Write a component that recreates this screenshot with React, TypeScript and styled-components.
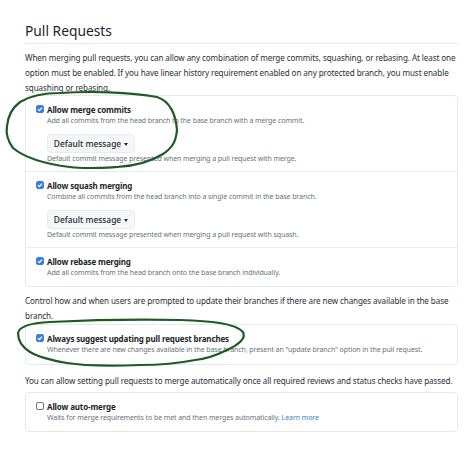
import React from "react";
import styled, { createGlobalStyle } from "styled-components";

const Global = createGlobalStyle`
  html, body { margin: 0; padding: 0; background: #fff; }
  body { font-family: "Noto Sans", "Liberation Sans", sans-serif; color: #1f2328; }
`;

const Page = styled.div`
  position: relative;
  width: 474px;
  height: 449px;
  padding: 20px 16px 0 25px;
  box-sizing: border-box;
  overflow: hidden;
`;

const Title = styled.h2`
  margin: 0;
  font-size: 13.8px;
  font-weight: 400;
  line-height: 22px;
  padding-bottom: 1px;
  border-bottom: 1px solid #e4e6e8;
  color: #1f2328;
`;

const Para = styled.p<{ $mt?: number }>`
  margin: ${(p) => p.$mt ?? 6}px 0 0;
  font-size: 8.1px;
  letter-spacing: -0.1px;
  line-height: 15px;
  color: #2b3036;
`;

const Box = styled.div<{ $mt?: number }>`
  margin-top: ${(p) => p.$mt ?? 5}px;
  border: 1px solid #e6e8eb;
  border-radius: 4px;
  background: #fff;
`;

const Row = styled.div<{ $h: number }>`
  height: ${(p) => p.$h}px;
  box-sizing: border-box;
  padding: 7px 10px 0 10px;
  & + & { border-top: 1px solid #eaecef; }
`;

const LabelLine = styled.div`
  display: flex;
  align-items: center;
  gap: 3px;
  height: 12px;
`;

const Check = styled.span<{ $on: boolean }>`
  width: 8px;
  height: 8px;
  border-radius: 2px;
  box-sizing: border-box;
  display: inline-flex;
  align-items: center;
  justify-content: center;
  background: ${(p) => (p.$on ? "#3b7fe0" : "#fff")};
  border: 1px solid ${(p) => (p.$on ? "#3b7fe0" : "#6e7781")};
`;

const Label = styled.span`
  font-size: 8px;
  letter-spacing: -0.15px;
  font-weight: 700;
  color: #1f2328;
`;

const Desc = styled.div`
  margin-left: 11px;
  font-size: 7px;
  letter-spacing: -0.08px;
  line-height: 11px;
  color: #6b7177;
`;

const Link = styled.span`
  color: #3f7ec8;
`;

const Btn = styled.div`
  margin: 8px 0 0 11px;
  width: 88px;
  height: 19px;
  box-sizing: border-box;
  border: 1px solid #e9ebee;
  border-radius: 4px;
  background: #f5f6f8;
  display: flex;
  align-items: center;
  justify-content: center;
  gap: 3px;
  font-size: 8.4px;
  font-weight: 500;
  color: #24292f;
`;

const Caret = styled.span`
  width: 0;
  height: 0;
  border-left: 2.5px solid transparent;
  border-right: 2.5px solid transparent;
  border-top: 3px solid #24292f;
  margin-top: 1px;
`;

const Note = styled.div`
  margin: 0 0 0 11px;
  font-size: 7px;
  letter-spacing: -0.08px;
  line-height: 11px;
  color: #6b7177;
`;

const Ink = styled.svg`
  position: absolute;
  left: 0;
  top: 0;
  pointer-events: none;
`;

const Tick = () => (
  <svg width="6" height="6" viewBox="0 0 6 6">
    <path d="M1 3.2 L2.4 4.6 L5 1.6" stroke="#fff" strokeWidth="1.2" fill="none" />
  </svg>
);

const Option = ({ on, label, desc }: { on: boolean; label: string; desc: React.ReactNode }) => (
  <>
    <LabelLine>
      <Check $on={on}>{on && <Tick />}</Check>
      <Label>{label}</Label>
    </LabelLine>
    <Desc>{desc}</Desc>
  </>
);

export default function App() {
  return (
    <>
      <Global />
      <Page>
        <Title>Pull Requests</Title>
        <Para $mt={6}>
          When merging pull requests, you can allow any combination of merge commits, squashing, or rebasing. At least one
          option must be enabled. If you have linear history requirement enabled on any protected branch, you must enable
          squashing or rebasing.
        </Para>
        <Box $mt={0}>
          <Row $h={75}>
            <Option on label="Allow merge commits" desc="Add all commits from the head branch to the base branch with a merge commit." />
            <Btn>
              Default message <Caret />
            </Btn>
            <Note>Default commit message presented when merging a pull request with merge.</Note>
          </Row>
          <Row $h={76}>
            <Option on label="Allow squash merging" desc="Combine all commits from the head branch into a single commit in the base branch." />
            <Btn>
              Default message <Caret />
            </Btn>
            <Note>Default commit message presented when merging a pull request with squash.</Note>
          </Row>
          <Row $h={39}>
            <Option on label="Allow rebase merging" desc="Add all commits from the head branch onto the base branch individually." />
          </Row>
        </Box>
        <Para $mt={6}>
          Control how and when users are prompted to update their branches if there are new changes available in the base
          branch.
        </Para>
        <Box $mt={1}>
          <Row $h={39}>
            <Option
              on
              label="Always suggest updating pull request branches"
              desc='Whenever there are new changes available in the base branch, present an "update branch" option in the pull request.'
            />
          </Row>
        </Box>
        <Para $mt={8}>You can allow setting pull requests to merge automatically once all required reviews and status checks have passed.</Para>
        <Box $mt={4}>
          <Row $h={38}>
            <Option
              on={false}
              label="Allow auto-merge"
              desc={
                <>
                  Waits for merge requirements to be met and then merges automatically. <Link>Learn more</Link>
                </>
              }
            />
          </Row>
        </Box>
        <Ink width="474" height="449" viewBox="0 0 474 449">
          <path
            d="M20 102 C 30 96, 45 93, 60 93 C 90 91, 130 92, 157 97 C 170 101, 176 115, 177 130 C 176 142, 172 148, 163 154 C 150 162, 135 166, 117 167 C 100 168, 85 169, 70 167 C 45 164, 25 158, 13 148 C 7 140, 6 132, 7 126 C 8 116, 12 108, 20 102 Z"
            stroke="#1f5a24"
            strokeWidth="2.2"
            fill="none"
            strokeLinecap="round"
            strokeLinejoin="round"
          />
          <path
            d="M18 333 C 19 327, 30 323, 50 322 C 90 320, 133 319, 180 320 C 210 321, 235 323, 243 332 C 246 338, 240 344, 227 350 C 215 356, 205 359, 195 360 C 175 364, 160 365, 140 365 C 110 366, 85 366, 67 363 C 50 360, 38 357, 30 352 C 22 347, 18 340, 18 333 Z"
            stroke="#1f5a24"
            strokeWidth="2.2"
            fill="none"
            strokeLinecap="round"
            strokeLinejoin="round"
          />
        </Ink>
      </Page>
    </>
  );
}
